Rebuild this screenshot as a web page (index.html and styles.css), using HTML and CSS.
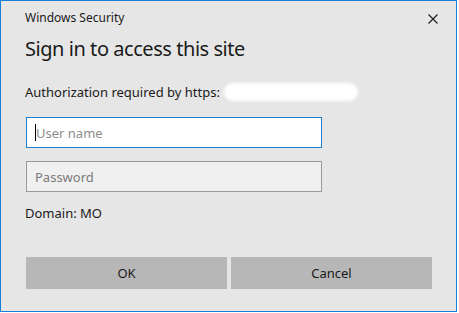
FILE: index.html
```html
<!DOCTYPE html>
<html>
<head>
<meta charset="utf-8">
<link rel="stylesheet" href="styles.css">
</head>
<body>
<div class="dialog">
  <div class="titlebar">
    <span class="title">Windows Security</span>
    <svg class="close" width="10" height="10" viewBox="0 0 10 10"><path d="M0.5 0.5L9.5 9.5M9.5 0.5L0.5 9.5" stroke="#1a1a1a" stroke-width="1.1" fill="none"/></svg>
  </div>
  <h1 class="heading">Sign in to access this site</h1>
  <p class="auth">Authorization required by https:<span class="blur"></span></p>
  <div class="field focused"><span class="caret"></span><span class="ph">User name</span></div>
  <div class="field pwd"><span class="ph">Password</span></div>
  <p class="domain">Domain: MO</p>
  <div class="buttons">
    <div class="btn">OK</div>
    <div class="btn">Cancel</div>
  </div>
</div>
</body>
</html>
```
FILE: styles.css
```css
html, body {
  margin: 0;
  padding: 0;
  background: #ffffff;
}
body {
  font-family: "Noto Sans", "Open Sans", sans-serif;
  color: #1a1a1a;
}
.dialog {
  box-sizing: border-box;
  width: 457px;
  height: 312px;
  border: 1px solid #1a7fd4;
  background: #e6e6e6;
  padding: 0 24px 0 24px;
  display: flex;
  flex-direction: column;
}
.titlebar {
  display: flex;
  justify-content: space-between;
  align-items: center;
  height: 16px;
  margin-top: 9px;
}
.title {
  font-size: 12px;
  line-height: 16px;
}
.close {
  margin-right: -6px;
  margin-top: 1px;
}
.heading {
  margin: 9px 0 0 0;
  font-size: 20px;
  font-weight: normal;
  line-height: 28px;
  letter-spacing: -0.45px;
}
.auth {
  margin: 20px 0 0 0;
  font-size: 13px;
  line-height: 18px;
  display: flex;
  align-items: center;
}
.blur {
  display: inline-block;
  width: 134px;
  height: 18px;
  margin-left: 4px;
  background: #ffffff;
  border-radius: 9px;
  filter: blur(1.5px);
}
.field {
  box-sizing: border-box;
  width: 296px;
  height: 31px;
  margin-left: 1px;
  border: 1px solid #999999;
  background: #f0f0f0;
  display: flex;
  align-items: center;
  padding-left: 8px;
  font-size: 13px;
  color: #7a7a7a;
}
.field.focused {
  margin-top: 16px;
  border-color: #1a7fd4;
  background: #ffffff;
  color: #8c8c8c;
}
.field.pwd {
  margin-top: 13px;
  background: #f0f0f0;
}
.caret {
  display: inline-block;
  width: 1px;
  height: 17px;
  background: #000000;
  margin-right: 0;
}
.domain {
  margin: 12px 0 0 0;
  font-size: 13px;
  line-height: 18px;
}
.buttons {
  display: flex;
  gap: 4px;
  margin-top: 35px;
  margin-left: 1px;
}
.btn {
  width: 201px;
  height: 32px;
  background: #b7b7b7;
  display: flex;
  align-items: center;
  justify-content: center;
  font-size: 13px;
  color: #1a1a1a;
}
```
